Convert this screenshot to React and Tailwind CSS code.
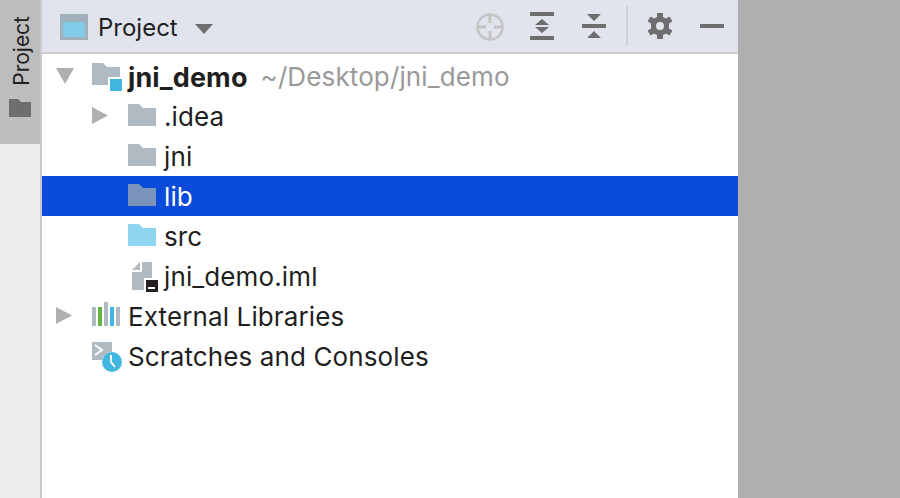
const Folder = ({ color = '#afbac3' }) => (
  <svg width="28" height="22" viewBox="0 0 28 22" className="-mt-[2px]">
    <path d="M0 0H11L15 4H28V22H0Z" fill={color} />
  </svg>
);

const Arrow = ({ open }) =>
  open ? (
    <svg width="18" height="16" viewBox="0 0 18 16">
      <path d="M0 0H18L9 16Z" fill="#afafaf" />
    </svg>
  ) : (
    <svg width="16" height="17" viewBox="0 0 16 17" className="-mt-[1px]">
      <path d="M0 0L16 8.500L0 17Z" fill="#afafaf" />
    </svg>
  );

const ModuleIcon = () => (
  <svg width="30" height="28" viewBox="0 0 30 28" className="mt-[2px]">
    <path d="M0 0H11L15 4H28V22H0Z" fill="#afbac3" />
    <rect x="16" y="14" width="14" height="14" fill="#fff" />
    <rect x="18" y="16" width="12" height="12" fill="#40b6e0" />
  </svg>
);

const ImlIcon = () => (
  <svg width="26" height="30" viewBox="0 0 26 30" className="mt-[2px]">
    <path d="M0 8L8 0V8Z" fill="#afbac3" />
    <path d="M10 0H20V18H14V28H0V10H10Z" fill="#afbac3" />
    <rect x="12" y="16" width="14" height="14" fill="#fff" />
    <rect x="14" y="18" width="12" height="12" fill="#231f20" />
    <rect x="16" y="25" width="7" height="2" fill="#fff" />
  </svg>
);

const LibrariesIcon = () => (
  <svg width="28" height="24" viewBox="0 0 28 24" className="-mt-[4px]">
    <rect x="0" y="5" width="4" height="19" fill="#afbac3" />
    <rect x="6" y="5" width="4" height="19" fill="#62b543" />
    <rect x="12" y="0" width="4" height="24" fill="#afbac3" />
    <rect x="18" y="5" width="4" height="19" fill="#40b6e0" />
    <rect x="24" y="5" width="4" height="19" fill="#afbac3" />
  </svg>
);

const ScratchIcon = () => (
  <svg width="30" height="30" viewBox="0 0 30 30" className="mt-[2px]">
    <path d="M0 0H20V10A10 10 0 0 0 10 18H0Z" fill="#afbac3" />
    <path d="M3 3L10 8L3 13" fill="none" stroke="#fff" strokeWidth="2" />
    <circle cx="20" cy="20" r="10" fill="#40b6e0" />
    <path d="M19 13V20L23 25" fill="none" stroke="#fff" strokeWidth="2" />
  </svg>
);

const Row = ({ indent, arrow, icon, selected, children }) => (
  <div className={`flex items-center h-10 ${selected ? 'bg-[#0a4bd9] text-white' : 'text-[#1f1f1f]'}`}>
    <div className={`${indent} flex items-center shrink-0`}>{arrow}</div>
    {icon}
    <div className="flex items-center mt-[2px] tracking-[0.12px]">{children}</div>
  </div>
);

export default function App() {
  return (
    <div
      className="flex w-[900px] h-[498px] overflow-hidden bg-white text-[26px] leading-none"
      style={{ fontFamily: 'Inter, sans-serif' }}
    >
      {/* Tool window strip */}
      <div className="w-[40px] shrink-0 bg-[#ececec]">
        <div className="h-[144px] bg-[#bdbdbd] flex flex-col items-center pt-[16px]">
          <span className="[writing-mode:vertical-rl] rotate-180 ml-[2px] text-[21px] text-[#1f1f1f]">Project</span>
          <svg width="22" height="18" viewBox="0 0 22 18" className="mt-[13px]">
            <path d="M0 0H9L12 3H22V18H0Z" fill="#6e6e6e" />
          </svg>
        </div>
      </div>
      <div className="w-[2px] shrink-0 bg-[#c9c9c9]" />

      <div className="w-[696px] shrink-0 flex flex-col">
        {/* Header */}
        <div className="h-[54px] shrink-0 bg-[#e1e4ed] border-b-2 border-[#cccccc] flex items-center">
          <svg width="28" height="26" viewBox="0 0 28 26" className="ml-[18px] mt-[2px]">
            <rect width="28" height="26" fill="#9fb0bc" />
            <rect x="3" y="8" width="22" height="15" fill="#82cbe8" />
          </svg>
          <span className="ml-[10px] mt-[4px] text-[24px] text-[#1f1f1f]">Project</span>
          <svg width="18" height="10" viewBox="0 0 18 10" className="ml-[17px] mt-[6px]">
            <path d="M0 0H18L9 10Z" fill="#6e6e6e" />
          </svg>

          <div className="ml-auto flex items-center">
            <svg width="28" height="28" viewBox="0 0 28 28" className="mt-[1px]">
              <circle cx="14" cy="14" r="12.5" fill="none" stroke="#c4c4c4" strokeWidth="2.5" />
              <path d="M14 1V10M14 18V27M1 14H10M18 14H27" stroke="#c4c4c4" strokeWidth="3" />
            </svg>
            <svg width="24" height="28" viewBox="0 0 24 28" className="ml-[26px]">
              <rect width="24" height="4" fill="#6e6e6e" />
              <rect y="24" width="24" height="4" fill="#6e6e6e" />
              <path d="M12 7L19 13H5ZM12 21L19 15H5Z" fill="#6e6e6e" />
            </svg>
            <svg width="24" height="26" viewBox="0 0 24 26" className="ml-[28px]">
              <rect y="11" width="24" height="4" fill="#6e6e6e" />
              <path d="M5 1H19L12 8ZM5 25H19L12 18Z" fill="#6e6e6e" />
            </svg>
            <div className="w-[2px] h-[40px] bg-[#cfd2da] ml-[20px]" />
            <svg width="26" height="26" viewBox="0 0 26 26" className="ml-[19px]">
              <path
                fillRule="evenodd"
                d="M10 0H16V4L19 5.500L22.500 3.500L25.500 8.500L22 10.500V15.500L25.500 17.500L22.500 22.500L19 20.500L16 22V26H10V22L7 20.500L3.500 22.500L0.500 17.500L4 15.500V10.500L0.500 8.500L3.500 3.500L7 5.500L10 4ZM13 9A4 4 0 1 0 13 17A4 4 0 1 0 13 9Z"
                fill="#6e6e6e"
              />
            </svg>
            <div className="w-[24px] h-[4px] bg-[#6e6e6e] ml-[27px] mr-[14px]" />
          </div>
        </div>

        {/* Tree */}
        <div className="pt-[2px]">
          <Row indent="w-[50px] pl-[14px]" arrow={<Arrow open />} icon={<ModuleIcon />}>
            <span className="font-bold text-[27px] ml-[6px]">jni_demo</span>
            <span className="ml-[13px] text-[#999999]">~/Desktop/jni_demo</span>
          </Row>
          <Row indent="w-[86px] pl-[50px]" arrow={<Arrow />} icon={<Folder />}>
            <span className="ml-[8px]">.idea</span>
          </Row>
          <Row indent="w-[86px]" icon={<Folder />}>
            <span className="ml-[8px]">jni</span>
          </Row>
          <Row indent="w-[86px]" selected icon={<Folder color="#7b94bb" />}>
            <span className="ml-[8px]">lib</span>
          </Row>
          <Row indent="w-[86px]" icon={<Folder color="#8ed6ef" />}>
            <span className="ml-[8px]">src</span>
          </Row>
          <Row indent="w-[90px]" icon={<ImlIcon />}>
            <span className="ml-[6px]">jni_demo.iml</span>
          </Row>
          <Row indent="w-[50px] pl-[14px]" arrow={<Arrow />} icon={<LibrariesIcon />}>
            <span className="ml-[8px]">External Libraries</span>
          </Row>
          <Row indent="w-[50px]" icon={<ScratchIcon />}>
            <span className="ml-[6px]">Scratches and Consoles</span>
          </Row>
        </div>
      </div>

      <div className="flex-1 bg-[#afafaf]" />
    </div>
  );
}
